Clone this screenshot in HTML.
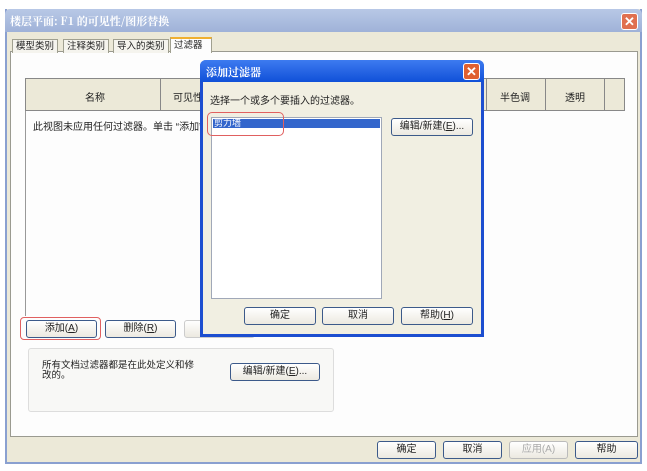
<!DOCTYPE html>
<html><head><meta charset="utf-8"><style>
*{margin:0;padding:0;box-sizing:border-box}
body{width:647px;height:471px;background:#fff;position:relative;overflow:hidden;font-family:"Liberation Sans","Noto Sans CJK SC",sans-serif;font-size:10px;color:#222}
.a{position:absolute}
.btn{position:absolute;border:1px solid #3c5a8a;border-radius:3px;background:linear-gradient(#fff,#ece9e0);text-align:center;font-size:10px;line-height:16px;height:18px}
</style></head><body>
<div class="a" style="left:5px;top:9px;width:637px;height:455px;background:#ece9d8;border:2px solid #8aa0d0;border-top:none"></div>
<div class="a" style="left:5px;top:9px;width:637px;height:23px;background:linear-gradient(#b8c8e6,#9fb2d8);border-radius:5px 5px 0 0"></div>
<div class="a" style="left:10px;top:13px;color:#fff;font-weight:bold;font-size:11px;font-family:'Noto Serif CJK SC',serif">楼层平面: F1 的可见性/图形替换</div>
<div class="a" style="left:621px;top:13px;width:17px;height:17px;background:#e07050;border:1px solid #fff;border-radius:3px;color:#fff;font-weight:bold;text-align:center;line-height:15px;font-size:13px">✕</div>
<div class="a" style="left:10px;top:51px;width:628px;height:386px;background:#fdfdfd;border:1px solid #9a9a90"></div>
<div class="a" style="left:12px;top:39px;height:14px;border:1px solid #a0a090;border-bottom:none;background:#f5f4ee;padding:0 3px;font-size:9.5px;line-height:13px">模型类别</div>
<div class="a" style="left:63px;top:39px;height:14px;border:1px solid #a0a090;border-bottom:none;background:#f5f4ee;padding:0 3px;font-size:9.5px;line-height:13px">注释类别</div>
<div class="a" style="left:113px;top:39px;height:14px;border:1px solid #a0a090;border-bottom:none;background:#f5f4ee;padding:0 3px;font-size:9.5px;line-height:13px">导入的类别</div>
<div class="a" style="left:170px;top:37px;width:42px;height:16px;border:1px solid #a0a090;border-top:2px solid #f0b030;border-bottom:none;background:#fdfdfd;padding:0 3px;font-size:9.5px;line-height:13px">过滤器</div>
<div class="a" style="left:25px;top:78px;width:600px;height:33px;background:#ece9d8;border:1px solid #888"></div>
<div class="a" style="left:160px;top:78px;width:1px;height:33px;background:#888"></div>
<div class="a" style="left:486px;top:78px;width:1px;height:33px;background:#888"></div>
<div class="a" style="left:545px;top:78px;width:1px;height:33px;background:#888"></div>
<div class="a" style="left:604px;top:78px;width:1px;height:33px;background:#888"></div>
<div class="a" style="left:85px;top:89px">名称</div>
<div class="a" style="left:173px;top:89px">可见性</div>
<div class="a" style="left:500px;top:89px">半色调</div>
<div class="a" style="left:565px;top:89px">透明</div>
<div class="a" style="left:25px;top:111px;width:1px;height:205px;background:#999"></div>
<div class="a" style="left:33px;top:118px">此视图未应用任何过滤器。单击 “添加”</div>
<div class="a" style="left:20px;top:317px;width:81px;height:23px;border:1px solid #e06060;border-radius:4px"></div>
<div class="btn" style="left:26px;top:320px;width:71px">添加(<u>A</u>)</div>
<div class="btn" style="left:105px;top:320px;width:71px">删除(<u>R</u>)</div>
<div class="btn" style="left:184px;top:320px;width:71px;border-color:#ccc"></div>
<div class="a" style="left:28px;top:348px;width:306px;height:64px;border:1px solid #ddd;border-radius:3px;background:#f8f8f6"></div>
<div class="a" style="left:42px;top:361px;font-size:9.5px;line-height:10px">所有文档过滤器都是在此处定义和修<br>改的。</div>
<div class="btn" style="left:230px;top:363px;width:90px">编辑/新建(<u>E</u>)...</div>
<div class="btn" style="left:377px;top:441px;width:59px">确定</div>
<div class="btn" style="left:443px;top:441px;width:59px">取消</div>
<div class="btn" style="left:509px;top:441px;width:59px;color:#aaa;border-color:#bbb">应用(A)</div>
<div class="btn" style="left:575px;top:441px;width:63px">帮助</div>
<!-- dialog -->
<div class="a" style="left:200px;top:60px;width:284px;height:277px;background:#f1efe2;border:3px solid #1c4ed0;border-top:none;border-radius:6px 6px 0 0"></div>
<div class="a" style="left:200px;top:60px;width:284px;height:22px;background:linear-gradient(#3d7bf0,#1050d8);border-radius:6px 6px 0 0"></div>
<div class="a" style="left:206px;top:64px;color:#fff;font-weight:bold;font-size:11px;font-family:'Noto Serif CJK SC',serif">添加过滤器</div>
<div class="a" style="left:463px;top:63px;width:17px;height:17px;background:#e06030;border:1px solid #fff;border-radius:3px;color:#fff;font-weight:bold;text-align:center;line-height:15px;font-size:13px">✕</div>
<div class="a" style="left:210px;top:92px">选择一个或多个要插入的过滤器。</div>
<div class="a" style="left:211px;top:117px;width:171px;height:182px;background:#fff;border:1px solid #a0a8b8"></div>
<div class="a" style="left:213px;top:119px;width:167px;height:9px;background:#3366cc"></div>
<div class="a" style="left:214px;top:117px;color:#fff;font-size:9px;line-height:12px">剪力墙</div>
<div class="a" style="left:207px;top:112px;width:77px;height:24px;border:1px solid #e06060;border-radius:5px"></div>
<div class="btn" style="left:391px;top:118px;width:82px">编辑/新建(<u>E</u>)...</div>
<div class="btn" style="left:244px;top:307px;width:72px">确定</div>
<div class="btn" style="left:322px;top:307px;width:72px">取消</div>
<div class="btn" style="left:401px;top:307px;width:72px">帮助(<u>H</u>)</div>
</body></html>
